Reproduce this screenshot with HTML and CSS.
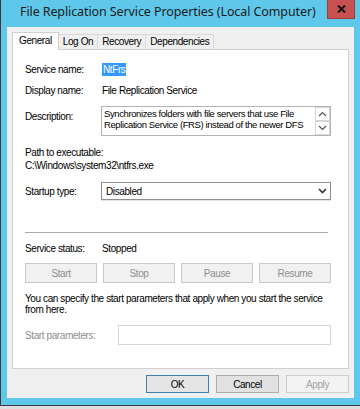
FILE: index.html
```html
<!DOCTYPE html>
<html lang="en">
<head>
    <meta charset="UTF-8">
    <title>File Replication Service Properties (Local Computer)</title>
    <link rel="stylesheet" href="styles.css">
</head>
<body>
    <div class="window">
        <div class="titlebar">
            <div class="title">File Replication Service Properties (Local Computer)</div>
            <div class="close">
                <svg width="9" height="8" viewBox="0 0 9 8"><path d="M1 0.5 L8 7.5 M8 0.5 L1 7.5" stroke="#111" stroke-width="2"/></svg>
            </div>
        </div>

        <div class="dialog">
            <div class="tabs">
                <div class="tab active">General</div>
                <div class="tab">Log On</div>
                <div class="tab">Recovery</div>
                <div class="tab">Dependencies</div>
            </div>

            <div class="panel">
                <div class="row first">
                    <div class="label">Service name:</div>
                    <div class="value"><span class="selected">NtFrs</span></div>
                </div>
                <div class="row second">
                    <div class="label">Display name:</div>
                    <div class="value">File Replication Service</div>
                </div>
                <div class="desc-row">
                    <div class="label">Description:</div>
                    <div class="textbox">
                        <div class="textbox-text">Synchronizes folders with file servers that use File<br>Replication Service (FRS) instead of the newer DFS</div>
                        <div class="scroll">
                            <div class="scroll-btn">
                                <svg width="9" height="6" viewBox="0 0 9 6"><path d="M1 5 L4.5 1.5 L8 5" fill="none" stroke="#555" stroke-width="1.2"/></svg>
                            </div>
                            <div class="scroll-btn">
                                <svg width="9" height="6" viewBox="0 0 9 6"><path d="M1 1 L4.5 4.5 L8 1" fill="none" stroke="#555" stroke-width="1.2"/></svg>
                            </div>
                        </div>
                    </div>
                </div>
                <div class="path">
                    <div>Path to executable:</div>
                    <div>C:\Windows\system32\ntfrs.exe</div>
                </div>
                <div class="startup-row">
                    <div class="label">Startup type:</div>
                    <div class="select">
                        <span>Disabled</span>
                        <svg width="9" height="6" viewBox="0 0 9 6"><path d="M1 1 L4.5 4.5 L8 1" fill="none" stroke="#333" stroke-width="1.6"/></svg>
                    </div>
                </div>
                <div class="divider"></div>
                <div class="row status">
                    <div class="label">Service status:</div>
                    <div class="value">Stopped</div>
                </div>
                <div class="service-btns">
                    <button class="btn" disabled>Start</button>
                    <button class="btn" disabled>Stop</button>
                    <button class="btn" disabled>Pause</button>
                    <button class="btn" disabled>Resume</button>
                </div>
                <p class="note">You can specify the start parameters that apply when you start the service<br>from here.</p>
                <div class="params-row">
                    <div class="label wide">Start parameters:</div>
                    <div class="input"></div>
                </div>
            </div>

            <div class="actions">
                <button class="btn dlg focus">OK</button>
                <button class="btn dlg">Cancel</button>
                <button class="btn dlg" disabled>Apply</button>
            </div>
        </div>
    </div>
</body>
</html>
```

FILE: styles.css
```css
* {
    box-sizing: border-box;
}

body {
    margin: 0;
    background-color: #dedede;
    font-family: "Liberation Sans", Arial, sans-serif;
    font-size: 10px;
    letter-spacing: -0.4px;
    color: #000;
}

.window {
    height: 406px;
    background-color: #5ec7ea;
    border-left: 1px solid #3a3a3a;
    border-bottom: 1px solid #3a3a3a;
    padding: 0 6px 7px 6px;
    display: flex;
    flex-direction: column;
}

.titlebar {
    height: 27px;
    display: flex;
    align-items: flex-start;
}
.title {
    font-family: "Noto Sans", "Open Sans", sans-serif;
    font-size: 12.5px;
    letter-spacing: -0.1px;
    line-height: 16px;
    margin-top: 4px;
    padding-left: 13px;
    color: #1c1c1c;
}
.close {
    margin-left: auto;
    margin-right: -1px;
    width: 28px;
    height: 19px;
    background-color: #c75050;
    border: 1px solid #a23c3c;
    border-top: none;
    display: flex;
    align-items: center;
    justify-content: center;
}

.dialog {
    flex: 1;
    background-color: #f0f0f0;
    padding: 5px 5px 5px 5px;
    display: flex;
    flex-direction: column;
}

.tabs {
    height: 17px;
    display: flex;
    align-items: flex-end;
}
.tab {
    height: 15px;
    line-height: 14px;
    padding: 0 4px;
    background-color: #f0f0f0;
    border: 1px solid #d9d9d9;
    border-bottom: none;
    margin-left: -1px;
}
.tab.active {
    position: relative;
    z-index: 1;
    height: 18px;
    margin-bottom: -1px;
    margin-left: 0;
    padding: 1px 6px 0;
    background-color: #fff;
    border-color: #d0d0d0;
}

.panel {
    height: 320px;
    background-color: #fff;
    border: 1px solid #d0d0d0;
    padding: 12px 17px 0 12px;
}

.row {
    display: flex;
    align-items: center;
    height: 14px;
}
.row.second {
    margin-top: 7px;
}
.label {
    width: 77px;
    flex-shrink: 0;
}
.label.wide {
    width: 93px;
    color: #8d8d8d;
}
.selected {
    background-color: #3399ff;
    color: #fff;
    padding: 1px 1px;
}

.desc-row {
    display: flex;
    margin-top: 9px;
}
.desc-row .label {
    width: 76px;
    margin-top: 4px;
    line-height: 14px;
}
.textbox {
    flex: 1;
    height: 30px;
    border: 1px solid #b4b4b4;
    display: flex;
}
.textbox-text {
    flex: 1;
    padding: 1px 0 0 2px;
    font-size: 9.5px;
    line-height: 11px;
    white-space: nowrap;
    overflow: hidden;
}
.scroll {
    width: 15px;
    display: flex;
    flex-direction: column;
}
.scroll-btn {
    flex: 1;
    border: 1px solid #d6d6d6;
    display: flex;
    align-items: center;
    justify-content: center;
}

.path {
    margin-top: 10px;
    line-height: 13px;
}

.startup-row {
    display: flex;
    align-items: center;
    margin-top: 10px;
}
.startup-row .label {
    width: 76px;
}
.select {
    flex: 1;
    height: 18px;
    border: 1px solid #8f8f8f;
    box-shadow: 0 1px 0 #e4e4e4;
    display: flex;
    align-items: center;
    justify-content: space-between;
    padding: 0 3px 0 4px;
}

.divider {
    margin-top: 32px;
    margin-right: 3px;
    border-top: 1px solid #a9a9a9;
}

.row.status {
    margin-top: 8px;
}

.service-btns {
    display: grid;
    grid-template-columns: repeat(4, 1fr);
    gap: 6px;
    margin-top: 8px;
}
.btn {
    height: 20px;
    font-family: inherit;
    font-size: 10px;
    letter-spacing: -0.4px;
    color: #000;
    background-color: #e1e1e1;
    border: 1px solid #adadad;
    padding: 0;
}
.btn:disabled {
    color: #8f8f8f;
    background-color: #f1f1f1;
    border-color: #c9c9c9;
}

.note {
    margin: 10px 0 0;
    line-height: 11px;
}

.params-row {
    display: flex;
    align-items: center;
    margin-top: 10px;
}
.input {
    flex: 1;
    height: 20px;
    border: 1px solid #d5d5d5;
}

.actions {
    display: flex;
    justify-content: flex-end;
    gap: 7px;
    margin-top: 6px;
}
.btn.dlg {
    width: 63px;
    height: 18px;
}
.btn.dlg.focus {
    border-color: #3c7fb1;
    background-color: #e5e5e5;
}
.btn.dlg:disabled {
    color: #a3a3a3;
    background-color: #f3f3f3;
    border-color: #cdcdcd;
}
```
